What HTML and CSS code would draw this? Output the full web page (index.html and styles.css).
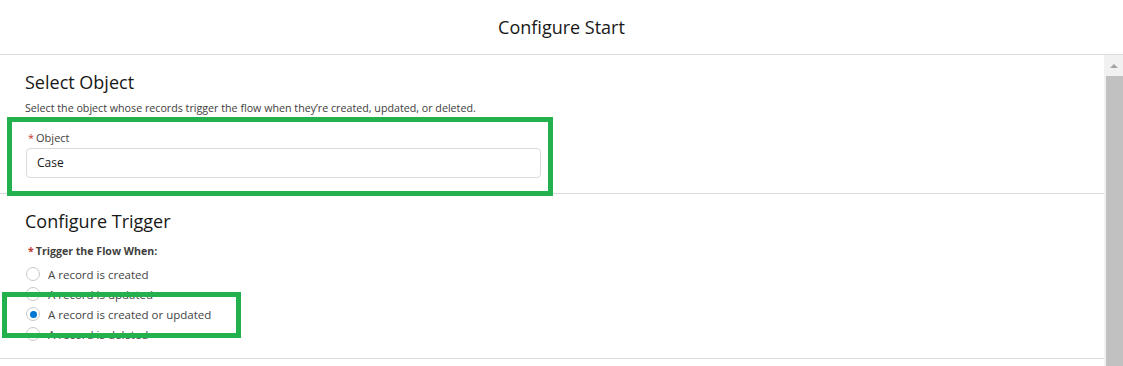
FILE: index.html
```html
<!DOCTYPE html>
<html lang="en">
<head>
<meta charset="utf-8">
<title>Configure Start</title>
<link rel="stylesheet" href="styles.css">
</head>
<body>
<div class="modal">
  <header class="modal-header">
    <h1 class="modal-title">Configure Start</h1>
  </header>
  <div class="modal-body">
    <div class="content">
      <section class="section">
        <h2 class="section-title">Select Object</h2>
        <p class="section-desc">Select the object whose records trigger the flow when they’re created, updated, or deleted.</p>
        <div class="field">
          <label class="field-label"><abbr class="req">*</abbr>Object</label>
          <div class="field-input">Case</div>
          <div class="highlight hl-object"></div>
        </div>
      </section>
      <section class="section section-trigger">
        <h2 class="section-title">Configure Trigger</h2>
        <div class="legend"><abbr class="req">*</abbr>Trigger the Flow When:</div>
        <ul class="radio-list">
          <li class="radio-item"><span class="radio"></span>A record is created</li>
          <li class="radio-item"><span class="radio"></span>A record is updated</li>
          <li class="radio-item"><span class="radio radio-checked"></span>A record is created or updated</li>
          <li class="radio-item"><span class="radio"></span>A record is deleted</li>
        </ul>
        <div class="highlight hl-trigger"></div>
      </section>
      <section class="section section-next"></section>
    </div>
    <div class="scrollbar">
      <div class="scroll-arrow"><span class="scroll-tri"></span></div>
      <div class="scroll-thumb"></div>
    </div>
  </div>
</div>
</body>
</html>
```
FILE: styles.css
```css
* { box-sizing: border-box; }
html, body {
  margin: 0;
  padding: 0;
  background: #fff;
}
body {
  font-family: "Open Sans", "Noto Sans", sans-serif;
  color: #181818;
  width: 1123px;
  height: 366px;
  overflow: hidden;
}
.modal {
  display: flex;
  flex-direction: column;
  height: 366px;
}
.modal-header {
  height: 55px;
  border-bottom: 1px solid #dddbda;
  display: flex;
  align-items: center;
  justify-content: center;
  flex: none;
}
.modal-title {
  margin: 0;
  font-size: 18px;
  font-weight: 400;
  line-height: 24px;
  color: #181818;
}
.modal-body {
  flex: 1;
  display: flex;
  min-height: 0;
}
.content {
  flex: 1;
  overflow: hidden;
}
.section {
  position: relative;
  padding: 15px 25px 15px;
  border-bottom: 1px solid #dddbda;
}
.section-title {
  margin: 0;
  font-size: 18px;
  font-weight: 400;
  line-height: 24px;
  color: #181818;
}
.section-desc {
  margin: 6px 0 0;
  font-size: 10.7px;
  line-height: 16px;
  color: #3e3e3c;
}
.field {
  position: relative;
  margin-top: 14px;
  width: 515px;
  margin-left: 1px;
}
.field-label {
  display: block;
  font-size: 11px;
  line-height: 15px;
  color: #3e3e3c;
  padding-left: 2px;
}
.req {
  color: #c23934;
  text-decoration: none;
  margin-right: 2px;
  font-weight: 400;
}
.field-input {
  margin-top: 3px;
  height: 30px;
  border: 1px solid #dddbda;
  border-radius: 4px;
  padding: 0 10px;
  font-size: 12px;
  line-height: 28px;
  color: #181818;
}
.highlight {
  position: absolute;
  border: 5px solid #22b14c;
  pointer-events: none;
}
.hl-object {
  left: -19px;
  top: -13px;
  width: 546px;
  height: 79px;
}
.section-trigger {
  padding-bottom: 14px;
}
.legend {
  margin-top: 11px;
  font-size: 10.6px;
  line-height: 15px;
  font-weight: 700;
  color: #3e3e3c;
  padding-left: 3px;
}
.legend .req {
  font-weight: 700;
}
.radio-list {
  list-style: none;
  margin: 5px 0 0;
  padding: 0;
}
.radio-item {
  display: flex;
  align-items: center;
  height: 20px;
  font-size: 11.5px;
  color: #444;
}
.radio {
  width: 14px;
  height: 14px;
  border: 1px solid #c9c9c9;
  border-radius: 50%;
  margin-left: 1px;
  margin-right: 8px;
  background: #fff;
  display: flex;
  align-items: center;
  justify-content: center;
}
.radio-checked::after {
  content: "";
  width: 7px;
  height: 7px;
  border-radius: 50%;
  background: #0176d3;
}
.hl-trigger {
  left: 2px;
  top: 98px;
  width: 239px;
  height: 46px;
}
.section-next {
  border-bottom: none;
  height: 40px;
}
.scrollbar {
  width: 19px;
  flex: none;
  background: #f1f1f1;
  display: flex;
  flex-direction: column;
}
.scroll-arrow {
  height: 21px;
  display: flex;
  align-items: center;
  justify-content: center;
}
.scroll-tri {
  width: 0;
  height: 0;
  border-left: 4px solid transparent;
  border-right: 4px solid transparent;
  border-bottom: 4px solid #a3a3a3;
}
.scroll-thumb {
  flex: 1;
  margin-left: 2px;
  background: #c1c1c1;
}
```
